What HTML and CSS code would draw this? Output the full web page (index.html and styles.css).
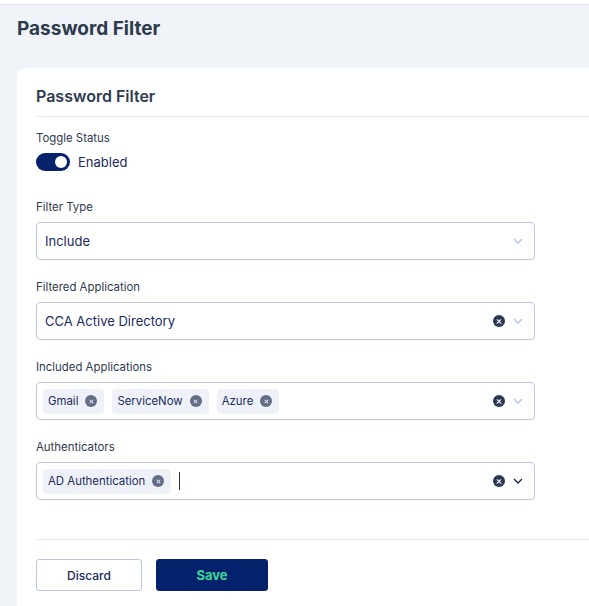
FILE: index.html
```html
<!DOCTYPE html>
<html lang="en">

<head>
    <meta charset="UTF-8">
    <meta name="viewport" content="width=device-width, initial-scale=1.0">
    <title>Password Filter</title>
    <link rel="stylesheet" href="styles.css">
</head>

<body>

    <div class="page">
        <h1 class="pageTitle">Password Filter</h1>

        <div class="card">
            <h2 class="cardTitle">Password Filter</h2>

            <div class="toggleGroup">
                <label class="fieldLabel">Toggle Status</label>
                <div class="toggleRow">
                    <span class="toggle"><span class="knob"></span></span>
                    <span class="toggleText">Enabled</span>
                </div>
            </div>

            <div class="field">
                <label class="fieldLabel">Filter Type</label>
                <div class="select">
                    <div class="value">Include</div>
                    <div class="indicators">
                        <svg class="chevron" width="10" height="6" viewBox="0 0 10 6"><path d="M1 1l4 4 4-4" fill="none" stroke="#b4c2e2" stroke-width="1.3"/></svg>
                    </div>
                </div>
            </div>

            <div class="field">
                <label class="fieldLabel">Filtered Application</label>
                <div class="select">
                    <div class="value">CCA Active Directory</div>
                    <div class="indicators">
                        <span class="clear"></span>
                        <svg class="chevron" width="10" height="6" viewBox="0 0 10 6"><path d="M1 1l4 4 4-4" fill="none" stroke="#b4c2e2" stroke-width="1.3"/></svg>
                    </div>
                </div>
            </div>

            <div class="field">
                <label class="fieldLabel">Included Applications</label>
                <div class="select multi">
                    <div class="chips">
                        <span class="chip">Gmail <span class="chipX"></span></span>
                        <span class="chip">ServiceNow <span class="chipX"></span></span>
                        <span class="chip">Azure <span class="chipX"></span></span>
                    </div>
                    <div class="indicators">
                        <span class="clear"></span>
                        <svg class="chevron" width="10" height="6" viewBox="0 0 10 6"><path d="M1 1l4 4 4-4" fill="none" stroke="#b4c2e2" stroke-width="1.3"/></svg>
                    </div>
                </div>
            </div>

            <div class="field">
                <label class="fieldLabel">Authenticators</label>
                <div class="select multi focused">
                    <div class="chips">
                        <span class="chip">AD Authentication <span class="chipX"></span></span>
                        <span class="caret"></span>
                    </div>
                    <div class="indicators">
                        <span class="clear"></span>
                        <svg class="chevron" width="10" height="6" viewBox="0 0 10 6"><path d="M1 1l4 4 4-4" fill="none" stroke="#1f2a44" stroke-width="1.4"/></svg>
                    </div>
                </div>
            </div>

            <div class="actions">
                <button class="btn discard">Discard</button>
                <button class="btn save">Save</button>
            </div>
        </div>
    </div>

</body>

</html>
```

FILE: styles.css
```css
html {
    font-family: Inter, "Noto Sans", sans-serif;
}

body {
    margin: 0;
    overflow: hidden;
    background-color: #ffffff;
}

.page {
    margin-top: 4px;
    border-top: 1px solid #e2e7ef;
    background-color: #f0f3f8;
    padding-left: 17px;
    min-height: 601px;
}

.pageTitle {
    margin: 0;
    padding-top: 13px;
    height: 50px;
    font-size: 19px;
    line-height: 22px;
    font-weight: 700;
    color: #2e3a4e;
}

.card {
    background-color: #ffffff;
    border-radius: 8px 0 0 0;
    padding-left: 19px;
    min-height: 540px;
}

.cardTitle {
    margin: 0;
    padding-top: 18px;
    padding-bottom: 10px;
    font-size: 16px;
    line-height: 20px;
    font-weight: 600;
    color: #2e3a4e;
    border-bottom: 1px solid #e2e7ef;
}

.fieldLabel {
    display: block;
    font-size: 11.4px;
    line-height: 16px;
    color: #2e3a4e;
}

.toggleGroup {
    padding-top: 13px;
    margin-bottom: 27px;
}

.toggleRow {
    display: flex;
    align-items: center;
    gap: 8px;
    margin-top: 6px;
    height: 20px;
}

.toggle {
    display: flex;
    align-items: center;
    justify-content: flex-end;
    width: 34px;
    height: 18px;
    padding: 0 3px;
    box-sizing: border-box;
    border-radius: 9px;
    background-color: #05226a;
}

.knob {
    width: 12px;
    height: 12px;
    border-radius: 50%;
    background-color: #ffffff;
}

.toggleText {
    font-size: 13px;
    color: #1b2a5c;
}

.field {
    margin-bottom: 19px;
}

.select {
    display: flex;
    align-items: center;
    width: 499px;
    height: 38px;
    margin-top: 7px;
    box-sizing: border-box;
    border: 1px solid #bac7e4;
    border-radius: 4px;
}

.value {
    flex: 1;
    padding-left: 8px;
    font-size: 13px;
    color: #1b2a5c;
}

.chips {
    flex: 1;
    display: flex;
    align-items: center;
    gap: 8px;
    padding-left: 6px;
}

.chip {
    display: flex;
    align-items: center;
    gap: 7px;
    height: 25px;
    padding: 0 7px 0 5px;
    border-radius: 4px;
    background-color: #eef2f8;
    font-size: 11.4px;
    color: #1b2a5c;
}

.chipX {
    position: relative;
    width: 12px;
    height: 12px;
    border-radius: 50%;
    background-color: #636d85;
}

.chipX::before,
.chipX::after {
    content: "";
    position: absolute;
    left: 3.5px;
    top: 5.5px;
    width: 5px;
    height: 1px;
    background-color: #eef2f8;
    transform: rotate(45deg);
}

.chipX::after {
    transform: rotate(-45deg);
}

.caret {
    width: 1px;
    height: 18px;
    background-color: #1f2a44;
}

.indicators {
    display: flex;
    align-items: center;
    gap: 8px;
    padding-right: 11px;
}

.clear {
    position: relative;
    width: 12px;
    height: 12px;
    border-radius: 50%;
    background-color: #2c3a52;
}

.clear::before,
.clear::after {
    content: "";
    position: absolute;
    left: 3px;
    top: 5.5px;
    width: 6px;
    height: 1.2px;
    background-color: #ffffff;
    transform: rotate(45deg);
}

.clear::after {
    transform: rotate(-45deg);
}

.chevron {
    display: block;
}

.actions {
    display: flex;
    gap: 14px;
    margin-top: 39px;
    padding-top: 19px;
    border-top: 1px solid #e2e7ef;
}

.btn {
    width: 106px;
    height: 32px;
    border-radius: 3px;
    font-family: Inter, "Noto Sans", sans-serif;
    font-size: 12px;
    cursor: pointer;
}

.discard {
    background-color: #ffffff;
    border: 1px solid #bac7e4;
    color: #1b2a5c;
    font-weight: 500;
}

.save {
    width: 112px;
    background-color: #03226b;
    border: 1px solid #03226b;
    color: #3fd89b;
    font-size: 13px;
    font-weight: 700;
}
```
